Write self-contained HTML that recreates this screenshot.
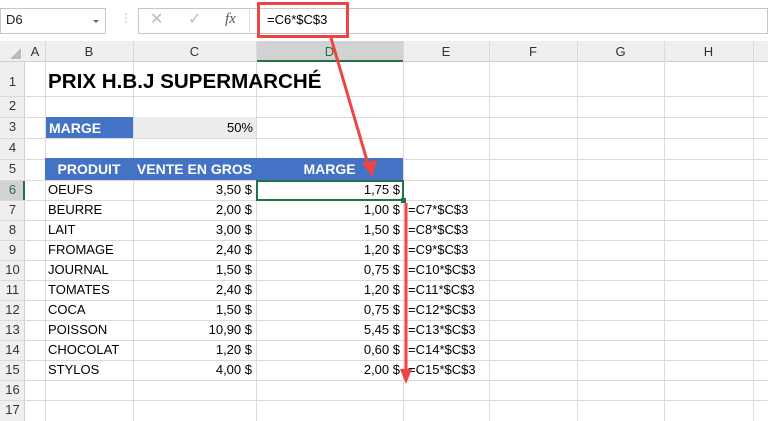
<!DOCTYPE html>
<html><head><meta charset="utf-8"><style>
*{margin:0;padding:0;box-sizing:border-box}
body{width:768px;height:421px;overflow:hidden;background:#fff;font-family:"Liberation Sans",Calibri,sans-serif;position:relative}
.a{position:absolute}
.t{position:absolute;font-size:13px;color:#000;white-space:nowrap;line-height:20px}
.h{position:absolute;font-size:13px;color:#333;text-align:center;line-height:20px}
.vl{position:absolute;width:1px;background:#dadada}
.hl{position:absolute;height:1px;background:#dadada}
.blue{position:absolute;background:#4472c4;color:#fff;font-weight:bold;font-size:14px;line-height:22px}
</style></head><body>
<div class="a" style="left:0;top:0;width:768px;height:41px;background:#fff"></div>
<div class="a" style="left:0;top:8px;width:106px;height:26px;border:1px solid #c6c6c6;background:#fff"></div>
<div class="t" style="left:6px;top:10px;font-size:13px;color:#222">D6</div>
<div class="a" style="left:93px;top:20px;border-left:3px solid transparent;border-right:3px solid transparent;border-top:3px solid #666"></div>
<div class="t" style="left:120px;top:8px;color:#bbb;font-size:12px">⋮</div>
<div class="a" style="left:138px;top:8px;width:630px;height:26px;border:1px solid #c6c6c6;background:#fff"></div>
<div class="t" style="left:150px;top:10px;color:#bbb;font-size:16px">✕</div>
<div class="t" style="left:188px;top:10px;color:#bbb;font-size:16px">✓</div>
<div class="t" style="left:225px;top:9px;color:#555;font-style:italic;font-family:'Liberation Serif',serif;font-size:15px">fx</div>
<div class="a" style="left:249px;top:10px;width:1px;height:22px;background:#ddd"></div>
<div class="t" style="left:267px;top:10px;font-size:13px">=C6*$C$3</div>
<div class="a" style="left:257px;top:2px;width:92px;height:36px;border:3px solid #ef4444"></div>
<!-- headers -->
<div class="a" style="left:0;top:41px;width:768px;height:21px;background:#efefef;border-bottom:1px solid #d0d0d0"></div>
<div class="a" style="left:0;top:62px;width:25px;height:359px;background:#efefef;border-right:1px solid #d0d0d0"></div>
<div class="a" style="left:10px;top:48px;border-left:11px solid transparent;border-bottom:11px solid #bbb"></div>
<div class="a" style="left:256px;top:41px;width:147px;height:21px;background:#d2d2d2;border-bottom:2px solid #217346"></div>
<div class="a" style="left:0;top:180px;width:25px;height:20px;background:#d2d2d2;border-right:2px solid #217346"></div>
<div class="h" style="left:25px;top:42px;width:20px">A</div>
<div class="h" style="left:45px;top:42px;width:88px">B</div>
<div class="h" style="left:133px;top:42px;width:123px">C</div>
<div class="h" style="left:256px;top:42px;width:147px;color:#217346">D</div>
<div class="h" style="left:403px;top:42px;width:86px">E</div>
<div class="h" style="left:489px;top:42px;width:88px">F</div>
<div class="h" style="left:577px;top:42px;width:87px">G</div>
<div class="h" style="left:664px;top:42px;width:89px">H</div>
<div class="vl" style="left:45px;top:41px;height:380px"></div>
<div class="vl" style="left:133px;top:41px;height:380px"></div>
<div class="vl" style="left:256px;top:41px;height:380px"></div>
<div class="vl" style="left:403px;top:41px;height:380px"></div>
<div class="vl" style="left:489px;top:41px;height:380px"></div>
<div class="vl" style="left:577px;top:41px;height:380px"></div>
<div class="vl" style="left:664px;top:41px;height:380px"></div>
<div class="vl" style="left:753px;top:41px;height:380px"></div>
<div class="hl" style="left:0;top:96px;width:768px"></div>
<div class="hl" style="left:0;top:117px;width:768px"></div>
<div class="hl" style="left:0;top:138px;width:768px"></div>
<div class="hl" style="left:0;top:159px;width:768px"></div>
<div class="hl" style="left:0;top:180px;width:768px"></div>
<div class="hl" style="left:0;top:200px;width:768px"></div>
<div class="hl" style="left:0;top:220px;width:768px"></div>
<div class="hl" style="left:0;top:240px;width:768px"></div>
<div class="hl" style="left:0;top:260px;width:768px"></div>
<div class="hl" style="left:0;top:280px;width:768px"></div>
<div class="hl" style="left:0;top:300px;width:768px"></div>
<div class="hl" style="left:0;top:320px;width:768px"></div>
<div class="hl" style="left:0;top:340px;width:768px"></div>
<div class="hl" style="left:0;top:360px;width:768px"></div>
<div class="hl" style="left:0;top:380px;width:768px"></div>
<div class="hl" style="left:0;top:400px;width:768px"></div>
<!-- row numbers -->
<div class="h" style="left:0;top:72px;width:25px">1</div>
<div class="h" style="left:0;top:96px;width:25px">2</div>
<div class="h" style="left:0;top:117px;width:25px">3</div>
<div class="h" style="left:0;top:138px;width:25px">4</div>
<div class="h" style="left:0;top:159px;width:25px">5</div>
<div class="h" style="left:0;top:180px;width:25px;color:#217346">6</div>
<div class="h" style="left:0;top:200px;width:25px">7</div>
<div class="h" style="left:0;top:220px;width:25px">8</div>
<div class="h" style="left:0;top:240px;width:25px">9</div>
<div class="h" style="left:0;top:260px;width:25px">10</div>
<div class="h" style="left:0;top:280px;width:25px">11</div>
<div class="h" style="left:0;top:300px;width:25px">12</div>
<div class="h" style="left:0;top:320px;width:25px">13</div>
<div class="h" style="left:0;top:340px;width:25px">14</div>
<div class="h" style="left:0;top:360px;width:25px">15</div>
<div class="h" style="left:0;top:380px;width:25px">16</div>
<div class="h" style="left:0;top:400px;width:25px">17</div>
<!-- content -->
<div class="t" style="left:48px;top:69px;font-size:20.6px;font-weight:bold;line-height:26px">PRIX H.B.J SUPERMARCHÉ</div>
<div class="blue" style="left:46px;top:117px;width:87px;height:21px;padding-left:3px">MARGE</div>
<div class="a" style="left:134px;top:117px;width:122px;height:21px;background:#ededed"></div>
<div class="t" style="left:134px;top:118px;width:119px;text-align:right">50%</div>
<div class="blue" style="left:45px;top:158px;width:358px;height:22px"></div>
<div class="blue" style="left:45px;top:158px;width:88px;text-align:center;background:none">PRODUIT</div>
<div class="blue" style="left:133px;top:158px;width:123px;text-align:center;background:none">VENTE EN GROS</div>
<div class="blue" style="left:256px;top:158px;width:147px;text-align:center;background:none">MARGE</div>
<div class="a" style="left:256px;top:180px;width:148px;height:21px;border:2px solid #217346"></div>
<div class="a" style="left:401px;top:198px;width:5px;height:5px;background:#217346"></div>
<div class="t" style="left:48px;top:180px">OEUFS</div><div class="t" style="left:133px;top:180px;width:119px;text-align:right">3,50 $</div><div class="t" style="left:256px;top:180px;width:144px;text-align:right">1,75 $</div>
<div class="t" style="left:48px;top:200px">BEURRE</div><div class="t" style="left:133px;top:200px;width:119px;text-align:right">2,00 $</div><div class="t" style="left:256px;top:200px;width:144px;text-align:right">1,00 $</div><div class="t" style="left:408px;top:200px">=C7*$C$3</div>
<div class="t" style="left:48px;top:220px">LAIT</div><div class="t" style="left:133px;top:220px;width:119px;text-align:right">3,00 $</div><div class="t" style="left:256px;top:220px;width:144px;text-align:right">1,50 $</div><div class="t" style="left:408px;top:220px">=C8*$C$3</div>
<div class="t" style="left:48px;top:240px">FROMAGE</div><div class="t" style="left:133px;top:240px;width:119px;text-align:right">2,40 $</div><div class="t" style="left:256px;top:240px;width:144px;text-align:right">1,20 $</div><div class="t" style="left:408px;top:240px">=C9*$C$3</div>
<div class="t" style="left:48px;top:260px">JOURNAL</div><div class="t" style="left:133px;top:260px;width:119px;text-align:right">1,50 $</div><div class="t" style="left:256px;top:260px;width:144px;text-align:right">0,75 $</div><div class="t" style="left:408px;top:260px">=C10*$C$3</div>
<div class="t" style="left:48px;top:280px">TOMATES</div><div class="t" style="left:133px;top:280px;width:119px;text-align:right">2,40 $</div><div class="t" style="left:256px;top:280px;width:144px;text-align:right">1,20 $</div><div class="t" style="left:408px;top:280px">=C11*$C$3</div>
<div class="t" style="left:48px;top:300px">COCA</div><div class="t" style="left:133px;top:300px;width:119px;text-align:right">1,50 $</div><div class="t" style="left:256px;top:300px;width:144px;text-align:right">0,75 $</div><div class="t" style="left:408px;top:300px">=C12*$C$3</div>
<div class="t" style="left:48px;top:320px">POISSON</div><div class="t" style="left:133px;top:320px;width:119px;text-align:right">10,90 $</div><div class="t" style="left:256px;top:320px;width:144px;text-align:right">5,45 $</div><div class="t" style="left:408px;top:320px">=C13*$C$3</div>
<div class="t" style="left:48px;top:340px">CHOCOLAT</div><div class="t" style="left:133px;top:340px;width:119px;text-align:right">1,20 $</div><div class="t" style="left:256px;top:340px;width:144px;text-align:right">0,60 $</div><div class="t" style="left:408px;top:340px">=C14*$C$3</div>
<div class="t" style="left:48px;top:360px">STYLOS</div><div class="t" style="left:133px;top:360px;width:119px;text-align:right">4,00 $</div><div class="t" style="left:256px;top:360px;width:144px;text-align:right">2,00 $</div><div class="t" style="left:408px;top:360px">=C15*$C$3</div>
<svg class="a" style="left:0;top:0" width="768" height="421">
<line x1="331" y1="38" x2="368" y2="164" stroke="#ef4444" stroke-width="3"/>
<polygon points="362,163 377,160 372,177" fill="#ef4444"/>
<line x1="406" y1="203" x2="406" y2="370" stroke="#ef4444" stroke-width="3"/>
<polygon points="400,369 412,369 406,384" fill="#ef4444"/>
</svg>
</body></html>
